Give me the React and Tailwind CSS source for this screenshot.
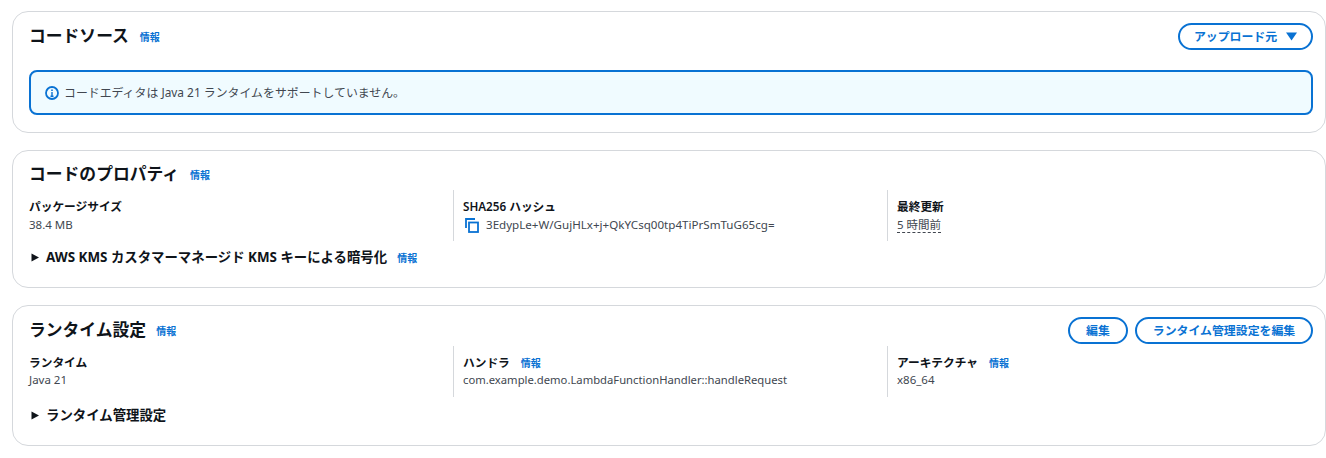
function Info({ className = "" }) {
  return <a className={"text-[10px] leading-4 font-bold text-[#0972d3] " + className}>情報</a>;
}

function Card({ className, children }) {
  return (
    <section className={"border border-[#d5d8dc] rounded-[16px] bg-white pl-[16px] pr-[12px] " + className}>
      {children}
    </section>
  );
}

function PillButton({ children, className = "" }) {
  return (
    <button className={"h-[27px] rounded-full border-2 border-[#0972d3] text-[11.9px] font-semibold text-[#0972d3] flex items-center justify-center " + className}>
      {children}
    </button>
  );
}

function Heading({ title, infoClass }) {
  return (
    <div className="flex items-center">
      <h2 className="text-[16.8px] leading-6 font-bold text-[#0f141a]">{title}</h2>
      <Info className={infoClass} />
    </div>
  );
}

function Caret() {
  return (
    <svg width="9" height="9" viewBox="0 0 9 9" className="ml-[2px] mr-[6px] shrink-0">
      <path d="M0.5 0.5 L8 4.5 L0.5 8.5 Z" fill="#0f141a" />
    </svg>
  );
}

function Field({ label, info, children, className = "", valueClass = "mt-[2px]" }) {
  return (
    <div className={className}>
      <div className="flex items-center h-4 text-[11.7px] font-semibold text-[#0f141a]">
        {label}
        {info && <Info className="ml-[11px]" />}
      </div>
      <div className={"text-[11.5px] leading-4 text-[#414750] " + valueClass}>{children}</div>
    </div>
  );
}

const divided = "border-l border-[#d5d8dc] pl-[9px]";

export default function App() {
  return (
    <div className="w-[1326px] h-[458px] bg-white overflow-hidden pt-[11px] pl-[12px] font-['Noto_Sans','Noto_Sans_CJK_JP',sans-serif]">
      <Card className="w-[1314px] h-[122px] pt-[12px]">
        <div className="flex items-start justify-between">
          <Heading title="コードソース" infoClass="ml-[11px] translate-y-[1px]" />
          <PillButton className="w-[135px] mt-[-1px]">
            <span>アップロード元</span>
            <svg width="11" height="9" viewBox="0 0 11 9" className="ml-[9px]">
              <path d="M0 0.5 H11 L5.5 8.5 Z" fill="#0972d3" />
            </svg>
          </PillButton>
        </div>
        <div className="mt-[20px] h-[45px] flex items-center rounded-[8px] border-2 border-[#0972d3] bg-[#f0fbff] pl-[14px]">
          <svg width="14" height="14" viewBox="0 0 14 14" className="mr-[5px]" fill="none" stroke="#0972d3" strokeWidth="1.8">
            <circle cx="7" cy="7" r="6" />
            <path d="M7 6 V10.5 M5.5 10.2 H8.5" strokeWidth="1.4" />
            <path d="M7 3.4 V5" strokeWidth="1.6" />
          </svg>
          <span className="text-[11.9px] text-[#414750]">コードエディタは Java 21 ランタイムをサポートしていません。</span>
        </div>
      </Card>

      <Card className="w-[1314px] h-[138px] mt-[17px] pt-[11px]">
        <Heading title="コードのプロパティ" infoClass="ml-[11px] translate-y-[1px]" />
        <div className="mt-[4px] grid grid-cols-[424px_434px_1fr] h-[51px]">
          <Field label="パッケージサイズ" className="pt-[9px]">38.4 MB</Field>
          <Field label="SHA256 ハッシュ" className={divided + " pt-[9px]"}>
            <span className="flex items-center text-[11.6px]">
              <svg width="14" height="15" viewBox="0 0 14 15" className="mr-[7px] ml-[2px]" fill="none" stroke="#0972d3" strokeWidth="1.8">
                <path d="M1 10 V1 H10" />
                <rect x="4" y="4.5" width="9" height="9.5" />
              </svg>
              3EdypLe+W/GujHLx+j+QkYCsq00tp4TiPrSmTuG65cg=
            </span>
          </Field>
          <Field label="最終更新" className={divided + " pt-[9px]"}>
            <span className="border-b border-dashed border-[#414750]">5 時間前</span>
          </Field>
        </div>
        <div className="mt-[6px] flex items-center">
          <Caret />
          <span className="text-[13.4px] leading-5 font-bold text-[#0f141a]">AWS KMS カスタマーマネージド KMS キーによる暗号化</span>
          <Info className="ml-[10px] translate-y-[1px]" />
        </div>
      </Card>

      <Card className="w-[1314px] h-[141px] mt-[17px] pt-[12px]">
        <div className="flex items-start justify-between">
          <Heading title="ランタイム設定" infoClass="ml-[10px] translate-y-[1px]" />
          <div className="flex gap-[7px] mt-[-1px]">
            <PillButton className="w-[60px]">編集</PillButton>
            <PillButton className="w-[178px]">ランタイム管理設定を編集</PillButton>
          </div>
        </div>
        <div className="mt-[2px] grid grid-cols-[424px_434px_1fr] h-[51px]">
          <Field label="ランタイム" className="pt-[9px]" valueClass="mt-[1px]">Java 21</Field>
          <Field label="ハンドラ" info className={divided + " pt-[9px]"} valueClass="mt-[1px] text-[11.25px]">com.example.demo.LambdaFunctionHandler::handleRequest</Field>
          <Field label="アーキテクチャ" info className={divided + " pt-[9px]"} valueClass="mt-[1px]">x86_64</Field>
        </div>
        <div className="mt-[8px] flex items-center">
          <Caret />
          <span className="text-[13.4px] leading-5 font-bold text-[#0f141a]">ランタイム管理設定</span>
        </div>
      </Card>
    </div>
  );
}
